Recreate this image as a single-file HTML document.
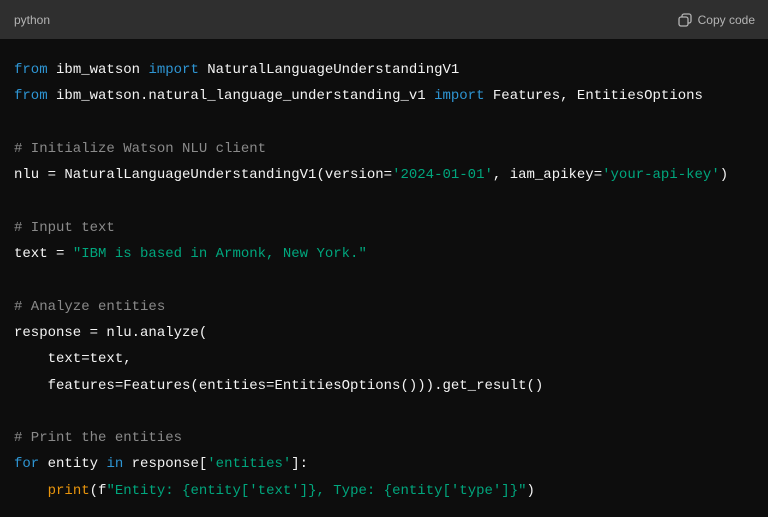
<!DOCTYPE html>
<html><head><style>
html,body{margin:0;padding:0;background:#0d0d0d;width:768px;height:517px;overflow:hidden}
.hd{height:39px;background:#2f2f2f;position:relative;font-family:"Liberation Sans",sans-serif;font-size:12px;color:#b4b4b4}
.hd .l{position:absolute;left:14px;top:13px}
.hd .r{position:absolute;right:13px;top:13px;display:flex;align-items:center}
.hd svg{margin-right:6px}
pre{margin:0;padding:18px 0 0 14px;font-family:"Liberation Mono",monospace;font-size:14px;line-height:26.3px;color:#f4f4f4}
.k{color:#2e95d3}.s{color:#00a67d}.c{color:#8a8a8a}.p{color:#e9950c}
</style></head><body>
<div class="hd"><span class="l">python</span><span class="r"><svg width="14" height="14" viewBox="0 0 14 14" fill="none" stroke="#b4b4b4" stroke-width="1.3"><rect x="1" y="4" width="9" height="9" rx="2"/><path d="M4 4V3a2 2 0 0 1 2-2h5a2 2 0 0 1 2 2v5a2 2 0 0 1-2 2h-1"/></svg>Copy code</span></div>
<pre><span class="k">from</span> ibm_watson <span class="k">import</span> NaturalLanguageUnderstandingV1
<span class="k">from</span> ibm_watson.natural_language_understanding_v1 <span class="k">import</span> Features, EntitiesOptions

<span class="c"># Initialize Watson NLU client</span>
nlu = NaturalLanguageUnderstandingV1(version=<span class="s">'2024-01-01'</span>, iam_apikey=<span class="s">'your-api-key'</span>)

<span class="c"># Input text</span>
text = <span class="s">"IBM is based in Armonk, New York."</span>

<span class="c"># Analyze entities</span>
response = nlu.analyze(
    text=text,
    features=Features(entities=EntitiesOptions())).get_result()

<span class="c"># Print the entities</span>
<span class="k">for</span> entity <span class="k">in</span> response[<span class="s">'entities'</span>]:
    <span class="p">print</span>(f<span class="s">"Entity: {entity['text']}, Type: {entity['type']}"</span>)
</pre>
</body></html>
